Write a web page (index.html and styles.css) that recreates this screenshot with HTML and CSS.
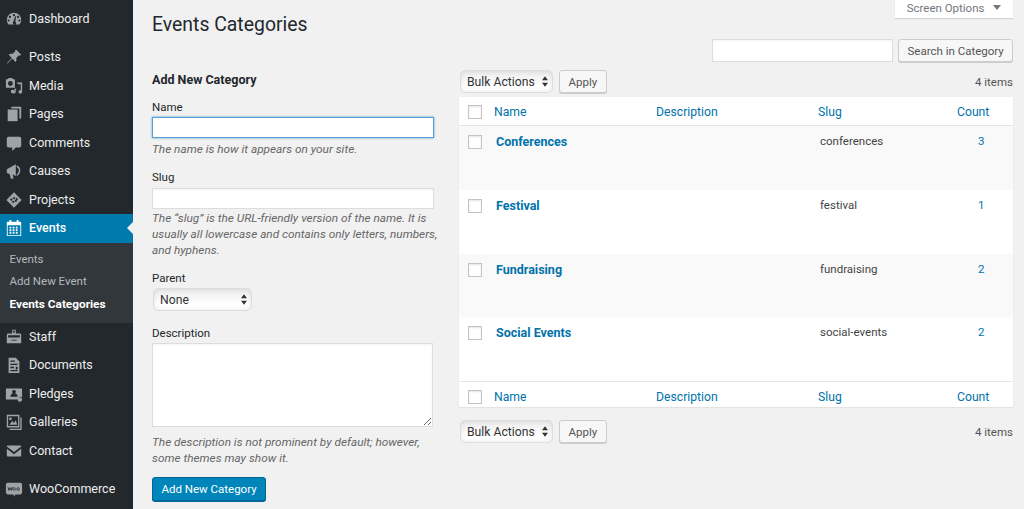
FILE: index.html
```html
<!DOCTYPE html>
<html lang="en">
<head>
<meta charset="utf-8">
<title>Events Categories</title>
<link rel="stylesheet" href="styles.css">
</head>
<body>
<div class="app">
  <nav class="sidebar">
    <a class="item sep-after"><svg class="ico" viewBox="0 0 20 20"><path d="M10 3a8 8 0 0 0-8 8c0 2 .7 3.800 2 5h12c1.300-1.200 2-3 2-5a8 8 0 0 0-8-8zm0 1.500a1.200 1.200 0 1 1 0 2.400 1.200 1.200 0 0 1 0-2.400zM5.500 6.500a1.200 1.200 0 1 1 0 2.400 1.200 1.200 0 0 1 0-2.400zm9 0a1.200 1.200 0 1 1 0 2.400 1.200 1.200 0 0 1 0-2.400zM4 10.500a1.200 1.200 0 1 1 0 2.400 1.200 1.200 0 0 1 0-2.400zm12 0a1.200 1.200 0 1 1 0 2.400 1.200 1.200 0 0 1 0-2.400zM11.500 7l.9.3-1 5.400a1.800 1.800 0 1 1-2.400.6z" fill-rule="evenodd"/></svg><span>Dashboard</span></a>
    <a class="item"><svg class="ico" viewBox="0 0 20 20"><path d="M12.500 2l5.500 5.500-1.500 1-1-.5-3 3c.5 1.800.2 3.200-.8 4.500L8 11.800 3 17l-1 .5.500-1L7.500 11 4 7.300c1.300-1 2.700-1.300 4.500-.8l3-3-.4-1z"/></svg><span>Posts</span></a>
    <a class="item"><svg class="ico" viewBox="0 0 20 20"><path d="M4 1h4l1 1.500h2V12H1V2.500h2zm2 3.500a2.700 2.700 0 1 0 0 5.400 2.700 2.700 0 0 0 0-5.400z" fill-rule="evenodd"/><path d="M13 6h6v10.500a2 2 0 1 1-1.500-1.900V8h-3zM9 18a2 2 0 1 1 1.500-1.900V13h2v1.500h-.5v2A2 2 0 0 1 9 18z"/></svg><span>Media</span></a>
    <a class="item"><svg class="ico" viewBox="0 0 20 20"><path d="M7 2h11v13h-2V4H7z"/><path d="M3 5h11v13H3z"/></svg><span>Pages</span></a>
    <a class="item"><svg class="ico" viewBox="0 0 20 20"><path d="M4 3h12a2 2 0 0 1 2 2v8a2 2 0 0 1-2 2h-4l-4 4v-4H4a2 2 0 0 1-2-2V5a2 2 0 0 1 2-2z"/></svg><span>Comments</span></a>
    <a class="item"><svg class="ico" viewBox="0 0 20 20"><path d="M2 8l10-5.500v13L8.500 14l1 4.500H6.500L5 13H3.500L2 12z"/><path d="M13 3.500a6.500 6.500 0 0 1 0 12v-2a4.500 4.500 0 0 0 0-8z"/></svg><span>Causes</span></a>
    <a class="item"><svg class="ico" viewBox="0 0 20 20"><path d="M10 1.500l8.500 8.500L10 18.500 1.500 10 9 2.500zM7 8l-1.500 1.500L7 11l1.500-1.500zm3-1.500l-1.500 1.500 1.500 1.500L11.500 8zm3 1L11.500 9l1.500 1.500 1.500-1.500zM7.500 12l1.500 1.500 1.500-1.500L9 10.500zm3-1 1.500 1.500L13.500 11 12 9.500z" fill-rule="evenodd"/></svg><span>Projects</span></a>
    <a class="item current"><svg class="ico" viewBox="0 0 20 20"><path d="M3 3h2V1h2v2h6V1h2v2h2a1 1 0 0 1 1 1v14a1 1 0 0 1-1 1H3a1 1 0 0 1-1-1V4a1 1 0 0 1 1-1zm0 4v11h14V7z" fill-rule="evenodd"/><path d="M5 8.500h2v2H5zm3.500 0h2v2h-2zm3.500 0h2v2h-2zM5 11.500h2v2H5zm3.500 0h2v2h-2zm3.500 0h2v2h-2zM5 14.500h2v2H5zm3.500 0h2v2h-2zm3.500 0h2v2h-2z"/></svg><span>Events</span></a>
    <div class="submenu">
      <a>Events</a>
      <a>Add New Event</a>
      <a class="on">Events Categories</a>
    </div>
    <a class="item"><svg class="ico" viewBox="0 0 20 20"><path d="M8 2h4v4h5a2 2 0 0 1 1 1.500V17H2V7.500A2 2 0 0 1 3 6h5zm1 1v2h2V3zM3.500 8v2.500h13V8zM7 13v1h6v-1z" fill-rule="evenodd"/></svg><span>Staff</span></a>
    <a class="item"><svg class="ico" viewBox="0 0 20 20"><path d="M4 2h8l4 4v13H4zm2 3v1.500h5V5zm0 3.500V10h8V8.500zM6 12v1.500h4V12zm6 0v3h2v-3zM6 15.500V17h8v-1.500z" fill-rule="evenodd"/></svg><span>Documents</span></a>
    <a class="item"><svg class="ico" viewBox="0 0 20 20"><path d="M1 4h18v9.500a3.500 3.500 0 0 0-5 2.500H1zm9 1.500a2 2 0 0 0-1 3.800C7 10 6 11 6 13h8c0-2-1-3-3-3.700a2 2 0 0 0-1-3.800z" fill-rule="evenodd"/><circle cx="16.500" cy="16" r="2.500"/></svg><span>Pledges</span></a>
    <a class="item"><svg class="ico" viewBox="0 0 20 20"><path d="M2 2h14v14H2zm1.500 1.500v11h11v-11zM5 13l3-4 2 2 2-3 1.500 5zM6 5a1.500 1.500 0 1 1 0 3 1.500 1.500 0 0 1 0-3z" fill-rule="evenodd"/><path d="M17 5h1.500v14H5v-1.500h12z"/></svg><span>Galleries</span></a>
    <a class="item sep-after"><svg class="ico" viewBox="0 0 20 20"><path d="M3 4h14a1 1 0 0 1 1 1L10 11 2 5a1 1 0 0 1 1-1z"/><path d="M2 7.500l8 6 8-6V15a1 1 0 0 1-1 1H3a1 1 0 0 1-1-1z"/></svg><span>Contact</span></a>
    <a class="item"><svg class="ico" viewBox="0 0 20 20"><path d="M3 3h14a2 2 0 0 1 2 2v9a2 2 0 0 1-2 2h-5.500L10 18.500 9.500 16H3a2 2 0 0 1-2-2V5a2 2 0 0 1 2-2z"/><path class="woo" d="M3.500 8l.8 3.500L6 8.500l1 3 1-3.500M10 8.500a1.300 1.500 0 1 0 .1 0zM14.500 8.500a1.300 1.500 0 1 0 .1 0z"/></svg><span>WooCommerce</span></a>
  </nav>

  <main class="content">
    <div class="screen-row"><button class="screen-tab" type="button">Screen Options <i class="down"></i></button></div>
    <h1>Events Categories</h1>
    <div class="search-row">
      <input class="search" type="text" aria-label="Search">
      <button class="btn search-btn" type="button">Search in Category</button>
    </div>
    <div class="columns">
      <form class="col-left">
        <h2>Add New Category</h2>
        <div class="field name-field">
          <label>Name</label>
          <input class="focus" type="text">
          <p>The name is how it appears on your site.</p>
        </div>
        <div class="field slug-field">
          <label>Slug</label>
          <input type="text">
          <p>The “slug” is the URL-friendly version of the name. It is usually all lowercase and contains only letters, numbers, and hyphens.</p>
        </div>
        <div class="field parent-field">
          <label>Parent</label>
          <div class="select parent"><select><option>None</option></select><svg viewBox="0 0 7 12"><path d="M3.500 0L7 4.500H0zM3.500 12L0 7.500h7z"/></svg></div>
        </div>
        <div class="field desc-field">
          <label>Description</label>
          <textarea></textarea>
          <p>The description is not prominent by default; however, some themes may show it.</p>
        </div>
        <button class="primary" type="button">Add New Category</button>
      </form>

      <section class="col-right">
        <div class="tablenav">
          <div class="select bulk"><select><option>Bulk Actions</option></select><svg viewBox="0 0 7 12"><path d="M3.500 0L7 4.500H0zM3.500 12L0 7.500h7z"/></svg></div>
          <button class="btn" type="button">Apply</button>
          <span class="count-label">4 items</span>
        </div>
        <div class="table">
          <div class="row head"><span class="cb"></span><a>Name</a><a>Description</a><a>Slug</a><a>Count</a></div>
          <div class="row body alt"><span class="cb"></span><a class="title">Conferences</a><span></span><span class="slug">conferences</span><a class="num">3</a></div>
          <div class="row body"><span class="cb"></span><a class="title">Festival</a><span></span><span class="slug">festival</span><a class="num">1</a></div>
          <div class="row body alt"><span class="cb"></span><a class="title">Fundraising</a><span></span><span class="slug">fundraising</span><a class="num">2</a></div>
          <div class="row body"><span class="cb"></span><a class="title">Social Events</a><span></span><span class="slug">social-events</span><a class="num">2</a></div>
          <div class="row foot"><span class="cb"></span><a>Name</a><a>Description</a><a>Slug</a><a>Count</a></div>
        </div>
        <div class="tablenav bottom">
          <div class="select bulk"><select><option>Bulk Actions</option></select><svg viewBox="0 0 7 12"><path d="M3.500 0L7 4.500H0zM3.500 12L0 7.500h7z"/></svg></div>
          <button class="btn" type="button">Apply</button>
          <span class="count-label">4 items</span>
        </div>
      </section>
    </div>
  </main>
</div>
</body>
</html>
```
FILE: styles.css
```css
* { box-sizing: border-box; }
html, body { margin: 0; height: 509px; overflow: hidden; }
body { background: #f1f1f1; color: #444; font: 11.500px/16px Roboto, "Liberation Sans", sans-serif; }
.app { display: flex; height: 509px; }

.sidebar { width: 133px; flex: none; background: #23282d; padding-top: 5px; font-size: 12.500px; color: #eee; }
.item { display: flex; align-items: center; height: 28.500px; padding-left: 5px; gap: 6px; position: relative; }
.item.sep-after { margin-bottom: 9.500px; }
.ico { width: 18px; height: 18px; fill: #9ea3a8; flex: none; }
.woo { fill: none; stroke: #23282d; stroke-width: 1; }
.current { background: #0079ad; color: #fff; font-weight: 500; }
.current .ico { fill: #fff; }
.current::after { content: ""; position: absolute; right: 0; top: 8px; border: 6.500px solid transparent; border-right-color: #f1f1f1; border-left-width: 0; }
.submenu { background: #32373c; height: 80px; padding: 5px 0 0 9.500px; font-size: 11.500px; color: #b4b9be; display: flex; flex-direction: column; }
.submenu a { height: 22.700px; line-height: 22.700px; }
.submenu .on { color: #fff; font-weight: 700; font-size: 11.800px; }

.content { flex: 1; min-width: 0; padding: 0 11px 0 19px; }
.screen-row { display: flex; justify-content: flex-end; height: 18px; }
.screen-tab { width: 118px; height: 18px; background: #fff; border: 0; box-shadow: 0 1px 1px rgba(0,0,0,.12); color: #72777c; font: inherit; padding: 0 0 5px; }
.down { display: inline-block; border: 4px solid transparent; border-top: 5px solid #72777c; border-bottom: 0; margin-left: 6px; vertical-align: 2px; }
h1 { margin: 0; font-size: 19.400px; line-height: 24px; height: 21px; font-weight: 400; color: #23282d; position: relative; top: -5px; }
.search-row { display: flex; justify-content: flex-end; gap: 5px; height: 31px; }
.search { width: 181px; height: 23px; }
.search-btn { width: 115px; padding: 0; white-space: nowrap; }
input, textarea { display: block; background: #fff; border: 1px solid #ddd; box-shadow: inset 0 1px 2px rgba(0,0,0,.05); outline: 0; border-radius: 0; margin: 0; }
.btn { height: 23px; background: #f7f7f7; border: 1px solid #ccc; border-radius: 3px; box-shadow: 0 1px 0 #ccc; color: #555; font: inherit; padding: 0 8.500px; }

.columns { display: flex; gap: 17px; }
.col-left { width: 290px; flex: none; }
h2 { margin: 0; padding-top: 1px; font-size: 12.500px; line-height: 18px; font-weight: 700; color: #23282d; }
.field label { display: block; line-height: 16px; color: #23282d; }
.field p { margin: 0; font-style: italic; color: #666; font-size: 11.800px; line-height: 16px; }
.field input { width: 282px; height: 21px; }
.name-field { margin-top: 10px; }
.name-field label { margin-bottom: 2px; }
.name-field p { margin-top: 3px; }
.focus { border-color: #5b9dd9 !important; box-shadow: 0 0 2px rgba(30,140,190,.8) !important; }
.slug-field { margin-top: 12px; }
.slug-field label { margin-bottom: 3px; }
.slug-field p { margin-top: 1px; }
.parent-field { margin-top: 12px; }
.parent-field label { margin-bottom: 2px; }
.desc-field { margin-top: 14px; }
.desc-field label { margin-bottom: 2px; }
textarea { width: 281px; height: 84px; resize: vertical; }
.desc-field p { margin-top: 7px; }
.primary { display: block; margin-top: 11px; width: 114px; height: 24px; background: #0085ba; border: 1px solid #006799; border-radius: 3px; box-shadow: 0 1px 0 #006799; color: #fff; font: inherit; padding: 0; }

.select { position: relative; height: 23px; }
.select select { appearance: none; width: 100%; height: 100%; display: block; border: 1px solid #ddd; border-radius: 5px; background: linear-gradient(#ebebeb, #fff 70%); box-shadow: inset 0 0 5px rgba(0,0,0,.1); color: #333; font: inherit; font-size: 12.200px; outline: 0; padding: 0 0 0 6px; margin: 0; }
.select svg { position: absolute; right: 5px; top: 6px; width: 6px; height: 11px; fill: #333; pointer-events: none; }
.parent { width: 99px; margin-left: 1px; }
.bulk { width: 93px; margin-left: 1px; }

.col-right { flex: 1; min-width: 0; }
.tablenav { display: flex; align-items: center; gap: 6px; height: 23px; }
.count-label { margin-left: auto; color: #555; }
.tablenav.bottom { margin-top: 13px; }
.table { margin-top: 4px; background: #fff; box-shadow: 0 1px 1px rgba(0,0,0,.06); font-size: 12.200px; }
.row { display: grid; grid-template-columns: 35px 162px 162px 139px 56px; align-items: start; }
.row a { color: #0073aa; }
.head { height: 29px; padding-top: 7px; border-bottom: 1px solid #e5e5e5; }
.foot { height: 26px; padding-top: 7px; border-top: 1px solid #e5e5e5; }
.body { height: 63.750px; padding-top: 8px; }
.alt { background: #f9f9f9; }
.cb { display: block; width: 14px; height: 14px; margin: 1px 0 0 9px; background: #fff; border: 1px solid #c4c4c4; box-shadow: inset 0 1px 2px rgba(0,0,0,.1); }
.row.body a.title { font-weight: 700; font-size: 12.500px; padding-left: 2px; }
.slug { color: #444; padding-left: 2px; font-size: 11.500px; line-height: 14px; }
.row a.num { padding-left: 21px; font-size: 11.500px; line-height: 14px; }
```
